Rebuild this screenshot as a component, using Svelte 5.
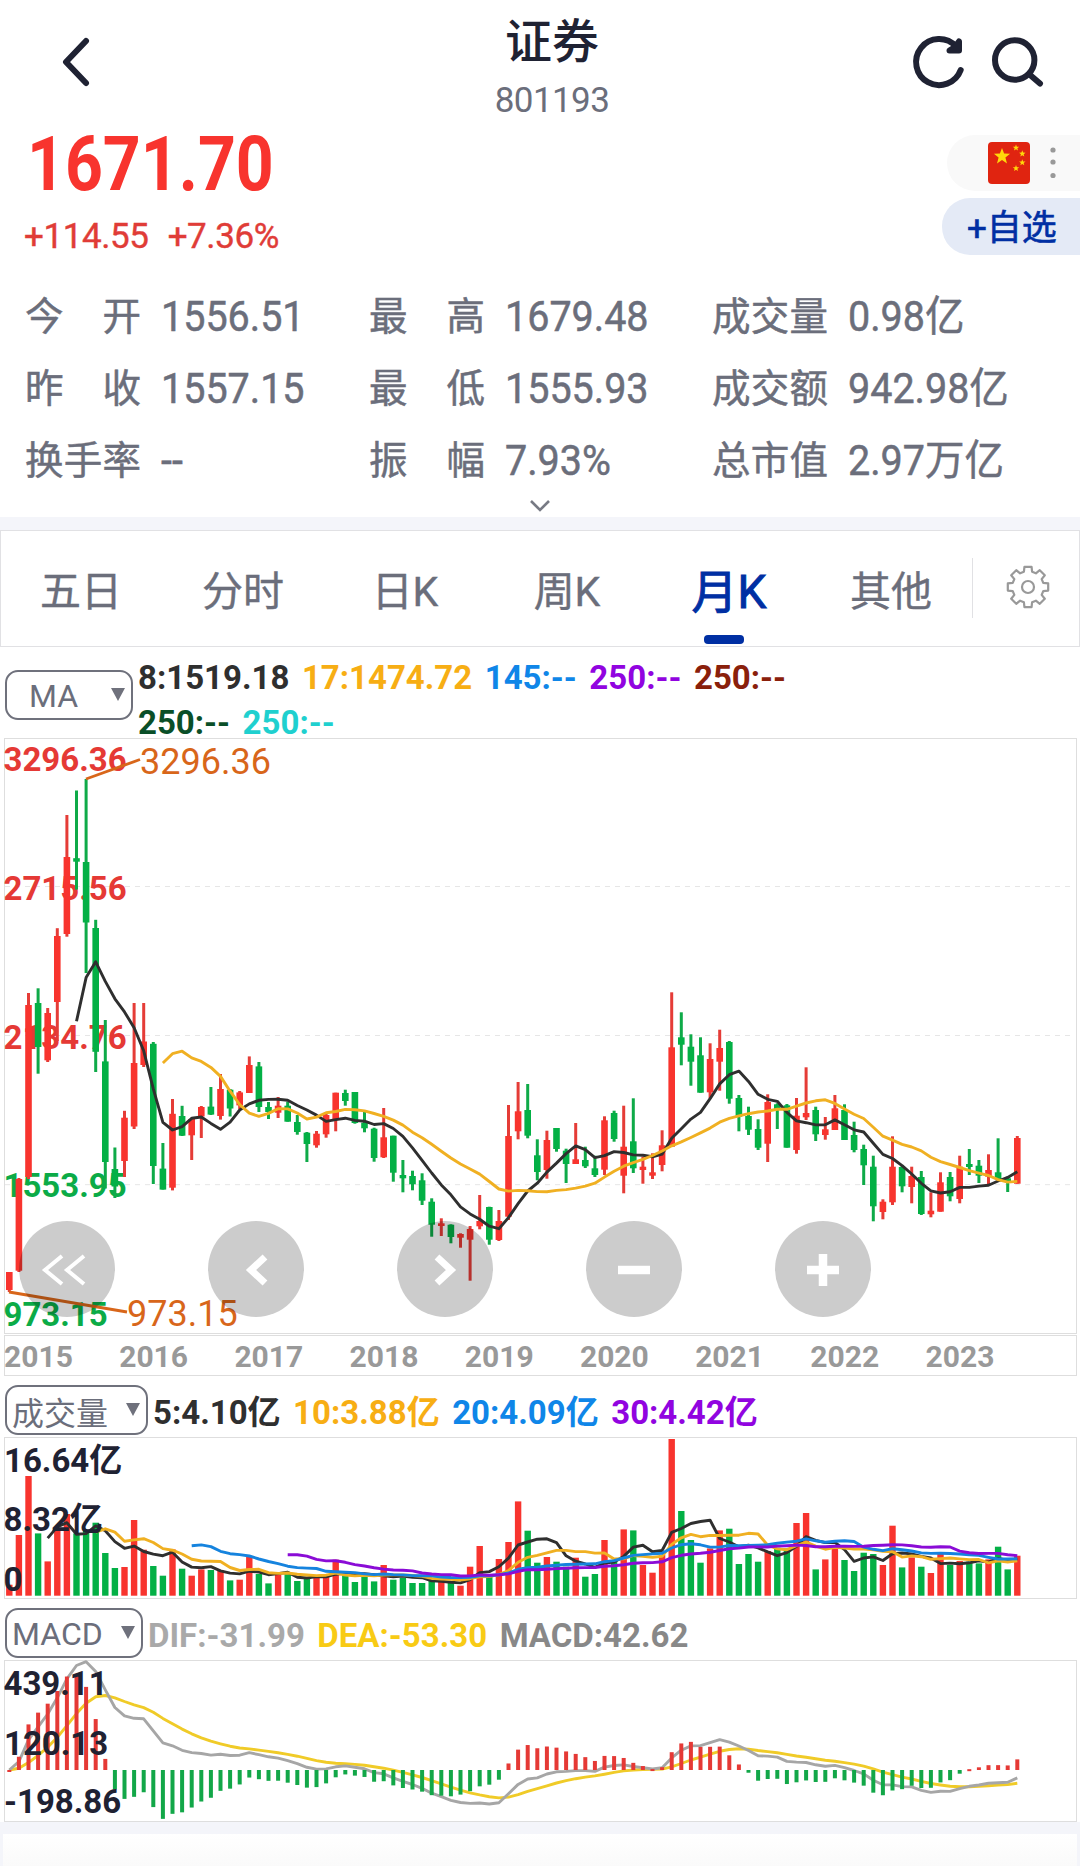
<script>
	const stats = [
		['今开', '1556.51'],
		['最高', '1679.48'],
		['成交量', '0.98亿'],
		['昨收', '1557.15'],
		['最低', '1555.93'],
		['成交额', '942.98亿'],
		['换手率', '--'],
		['振幅', '7.93%'],
		['总市值', '2.97万亿']
	];

	const tabs = ['五日', '分时', '日K', '周K', '月K', '其他'];
	let activeTab = '月K';

	const maLegend = [
		['8:1519.18', '#2f2f2f'],
		['17:1474.72', '#f7ae14'],
		['145:--', '#0f86e8'],
		['250:--', '#9104e0'],
		['250:--', '#8a200b'],
		['250:--', '#0a4f28'],
		['250:--', '#1fd0cf']
	];
	const volLegend = [
		['5:4.10亿', '#2f2f2f'],
		['10:3.88亿', '#f7ae14'],
		['20:4.09亿', '#0f86e8'],
		['30:4.42亿', '#9104e0']
	];
	const macdLegend = [
		['DIF:-31.99', '#a9a9a9'],
		['DEA:-53.30', '#f8cb15'],
		['MACD:42.62', '#888']
	];

	const years = [2015, 2016, 2017, 2018, 2019, 2020, 2021, 2022, 2023];

	// high, body top, body bottom, low, 1 = rising month (y positions in the price pane)
	const candles = [
		[1272, 1272, 1290, 1292, 1], [1178, 1179, 1270.7, 1272, 1], [993, 1005, 1177, 1179, 1],
		[988.3, 1003, 1047, 1073.7, 0], [1008, 1013, 1060.3, 1062, 1], [928.2, 936, 1002, 1041, 1],
		[815, 857, 934, 936.7, 1], [790.5, 858.2, 861.7, 889.6, 0], [779, 862, 922.5, 973, 0],
		[919.8, 928, 1051.8, 1072, 0], [1020, 1061.4, 1162, 1188.5, 0], [1147.5, 1169, 1186.5, 1198, 0],
		[1110.8, 1117.7, 1161, 1177, 1], [1003, 1063, 1126.5, 1129, 1], [1003, 1041.5, 1065, 1067, 1],
		[1042, 1043.8, 1166, 1184, 0], [1143, 1168.6, 1189.6, 1189.6, 0], [1099, 1113.8, 1187.7, 1190.4, 1],
		[1105.8, 1116, 1135.7, 1136, 0], [1117.7, 1119, 1135.3, 1160, 1], [1106, 1107, 1116.5, 1138, 1],
		[1087, 1106.6, 1114.6, 1115, 0], [1074, 1089, 1116, 1119.6, 1], [1089, 1089.7, 1108.5, 1116.5, 0],
		[1091, 1092.4, 1105.4, 1109, 1], [1056.4, 1065, 1093, 1093, 1], [1062, 1066.4, 1107, 1112, 0],
		[1102, 1107, 1112, 1119, 0], [1097, 1105.7, 1112.7, 1118, 1], [1101.7, 1105.7, 1121.7, 1121.7, 0],
		[1115, 1122, 1132, 1134.7, 0], [1132, 1132.7, 1144, 1162, 0], [1131, 1133.7, 1145.3, 1147.7, 1],
		[1112.7, 1115, 1134.3, 1137.7, 1], [1092.7, 1092.7, 1119.3, 1131.3, 1], [1089.7, 1093, 1101, 1105.7, 0],
		[1092, 1092, 1123, 1123.7, 0], [1111.7, 1122.7, 1128.3, 1132.3, 0], [1127.7, 1128.7, 1158, 1161.7, 0],
		[1108, 1137.3, 1157.3, 1158, 1], [1135.7, 1135.7, 1172.7, 1181.7, 0], [1160, 1175, 1178.3, 1192.3, 0],
		[1170.7, 1176, 1184.3, 1190.3, 0], [1173.3, 1180.3, 1200.7, 1205, 0], [1198.3, 1201.7, 1224.7, 1236.7, 0],
		[1218.3, 1223.3, 1226, 1236, 1], [1224.3, 1224.7, 1237, 1243.3, 0], [1233.3, 1234, 1237.7, 1247.7, 1],
		[1226, 1229, 1239.7, 1280.7, 1], [1195, 1221, 1226.3, 1229.3, 1], [1206.7, 1207, 1239.7, 1244.7, 0],
		[1210, 1221, 1240, 1241, 1], [1105, 1136, 1216.7, 1220, 1], [1082, 1111.3, 1131.3, 1139.3, 1],
		[1084, 1110, 1135.7, 1138.3, 0], [1139.3, 1155.3, 1172, 1180.3, 0], [1130.7, 1140, 1170, 1178.7, 1],
		[1128, 1128, 1149, 1151.7, 0], [1148.7, 1150.7, 1164, 1183, 0], [1123, 1159.3, 1164, 1164, 1],
		[1146.7, 1160, 1166.3, 1168, 0], [1155.7, 1168.3, 1175, 1177, 0], [1116.3, 1120.3, 1169.7, 1175, 1],
		[1110.7, 1113, 1139, 1141.7, 0], [1105.7, 1146.7, 1175.7, 1193.3, 1], [1098.3, 1141.3, 1168.3, 1173, 0],
		[1156.7, 1166.7, 1170, 1183.7, 1], [1153.3, 1172.3, 1175.7, 1179, 1], [1130.3, 1145.3, 1165, 1171.3, 1],
		[992.3, 1047.3, 1146.7, 1146.7, 1], [1012.3, 1037.3, 1044.7, 1065.3, 0], [1034.3, 1046.7, 1061.7, 1085.7, 0],
		[1037.3, 1055.3, 1092.7, 1092.7, 0], [1043.3, 1059, 1092.3, 1098.3, 1], [1029.7, 1048, 1061.7, 1090.7, 1],
		[1041, 1042, 1098.7, 1103.7, 0], [1095, 1098, 1116.7, 1131.3, 0], [1106.7, 1116, 1129.7, 1135, 0],
		[1119.3, 1129, 1147.7, 1150, 0], [1094.3, 1102, 1143.7, 1162, 1], [1103.3, 1104.3, 1109, 1129, 0],
		[1104, 1105.3, 1147.7, 1147.7, 0], [1098, 1115.7, 1150, 1153.7, 1], [1067.3, 1113, 1117.3, 1120, 1],
		[1106.7, 1110, 1134.3, 1141, 0], [1117, 1129.3, 1135, 1139.7, 1], [1095, 1108.3, 1130, 1130, 1],
		[1104.3, 1110, 1140, 1140, 0], [1121.7, 1135, 1150, 1152.3, 0], [1144.7, 1149, 1165.3, 1185, 0],
		[1155.7, 1166.7, 1206.3, 1221.3, 0], [1199.3, 1201.7, 1212, 1219.3, 1], [1136.3, 1166.7, 1202.3, 1205, 1],
		[1165, 1167, 1186.3, 1192.3, 0], [1166.7, 1176, 1187, 1203.3, 1], [1171, 1177, 1214, 1215, 0],
		[1192.3, 1210.7, 1214.3, 1217.3, 1], [1172.3, 1182.3, 1211.7, 1211.7, 1], [1172, 1177, 1196.3, 1201.3, 0],
		[1155.7, 1166.7, 1199, 1203.3, 1], [1149, 1164, 1167, 1175, 0], [1160, 1165.7, 1175.7, 1183, 0],
		[1154.3, 1170, 1176.7, 1185.7, 1], [1138.3, 1172.3, 1179.3, 1180, 0], [1176.7, 1178.3, 1181.7, 1192, 0],
		[1136, 1138, 1183.7, 1183.7, 1]
	];

	// bar heights of the volume pane
	const volumes = [
		11, 60.7, 119.7, 62.3, 34.3, 67, 81.7, 62.3, 65, 73, 42.7, 27.7, 28.7, 75.7, 46, 29.7, 20, 46.3,
		27, 20, 26.3, 25.7, 25.7, 15.3, 16, 39.7, 21.7, 12.3, 20.7, 23.3, 14.7, 17.3, 19.7, 19.7, 36,
		20.7, 13.7, 19.7, 14.3, 30.7, 16, 18, 12.7, 12.7, 14.7, 13.7, 13, 10, 29, 49.7, 19, 36.7, 53.7,
		94.3, 65, 33, 38.7, 34, 29, 38, 19, 21.7, 55.7, 34, 66.3, 65.3, 30.7, 23, 40.7, 156.7, 84.7,
		55.7, 33, 47.3, 65.3, 67, 31.7, 41.7, 34, 44.7, 48, 47.3, 72.7, 82.7, 26.3, 36.3, 49, 35.7,
		24.7, 43, 41.7, 30.7, 70, 28.3, 38.3, 29, 22.7, 42.3, 30.7, 34.7, 34, 32.3, 36.3, 49, 26.3, 40
	];

	const x = (i) => 9.3 + 9.6 * i;
	const color = (up) => (up ? '#f8342e' : '#03b045');

	function average(values, n) {
		return values.map((_, i) =>
			i < n - 1 ? null : values.slice(i - n + 1, i + 1).reduce((a, b) => a + b, 0) / n
		);
	}

	function ema(values, n) {
		let last = values[0];
		return values.map((v) => (last = last + ((v - last) * 2) / (n + 1)));
	}

	const line = (values, y = (v) => v) =>
		values
			.map((v, i) => (v === null ? null : `${x(i).toFixed(1)},${y(v).toFixed(1)}`))
			.filter(Boolean)
			.join(' ');

	const closes = candles.map((c) => (c[4] ? c[1] : c[2]));
	const volY = (v) => 1595.7 - v;

	const prices = closes.map((y) => 973.15 + (1291.8 - y) * 4.53);
	const slow = ema(prices, 26);
	const dif = ema(prices, 12).map((v, i) => v - slow[i]);
	const dea = ema(dif, 9);
	const macdY = (v) => 1770 - v / 4.06;

	const gear = Array.from({ length: 8 }, (_, k) =>
		[[15.8, -15], [20.5, -10], [20.5, 10], [15.8, 15]].map(([r, d]) => {
			const a = ((k * 45 + d) * Math.PI) / 180;
			return `${(22 + r * Math.sin(a)).toFixed(2)},${(22 - r * Math.cos(a)).toFixed(2)}`;
		})
	)
		.flat()
		.join(' ');

	const star = (cx, cy, r) =>
		Array.from({ length: 10 }, (_, k) => {
			const a = (k * Math.PI) / 5;
			const d = k % 2 ? r * 0.42 : r;
			return `${(cx + d * Math.sin(a)).toFixed(2)},${(cy - d * Math.cos(a)).toFixed(2)}`;
		}).join(' ');
</script>

<div class="page">
	<header>
		<svg class="back" width="32" height="52" viewBox="0 0 32 52">
			<path d="M26 5 L6 26 L26 47" />
		</svg>
		<div class="title">
			<h1>证券</h1>
			<span>801193</span>
		</div>
		<svg class="actions" width="140" height="60" viewBox="910 32 140 60">
			<path d="M960.7 70 A23 23 0 1 1 956 46.5" />
			<path class="head" d="M959 41.5 L959 50.5 L949.5 50.5 L955 47 Z" />
			<circle cx="1014.7" cy="60" r="19.7" />
			<path d="M1029.5 74.5 L1040 83.5" />
		</svg>
	</header>

	<section class="quote">
		<div>
			<div class="price">1671.70</div>
			<div class="change"><span>+114.55</span><span>+7.36%</span></div>
		</div>
		<div class="pills">
			<div class="market">
				<svg width="42" height="42" viewBox="0 0 42 42">
					<rect width="42" height="42" rx="4" fill="#e02410" />
					<g fill="#ffd80a">
						<polygon points={star(14, 14.5, 8.5)} />
						<polygon points={star(28, 5.8, 3.4)} />
						<polygon points={star(34.3, 11.7, 3.4)} />
						<polygon points={star(34.3, 20.6, 3.4)} />
						<polygon points={star(28, 26.3, 3.4)} />
					</g>
				</svg>
				<svg width="6" height="34" viewBox="0 0 6 34" fill="#999">
					<circle cx="3" cy="4" r="2.6" />
					<circle cx="3" cy="16" r="2.6" />
					<circle cx="3" cy="29.5" r="2.6" />
				</svg>
			</div>
			<div class="add">+自选</div>
		</div>
	</section>

	<section class="stats">
		{#each stats as [label, value]}
			<div class="stat">
				<span class="label">{#each [...label] as ch}<i>{ch}</i>{/each}</span>
				<span class="value">{value}</span>
			</div>
		{/each}
	</section>
	<div class="more">
		<svg width="22" height="14" viewBox="0 0 22 14"><path d="M2 2 L11 11 L20 2" /></svg>
	</div>

	<nav>
		{#each tabs as tab}
			<button class:active={tab === activeTab} on:click={() => (activeTab = tab)}>{tab}</button>
		{/each}
		<div class="settings">
			<svg width="44" height="44" viewBox="0 0 44 44">
				<polygon points={gear} />
				<circle cx="22" cy="22" r="6" />
			</svg>
		</div>
	</nav>

	<div class="bar ma-bar">
		<div class="select ma">MA<b></b></div>
		<div class="legend">
			{#each maLegend as [text, c]}<span style="color: {c}">{text}</span>{/each}
		</div>
	</div>

	<div class="panel price-panel">
		<svg width="1071" height="594" viewBox="5 739 1071 594">
			{#each [886.5, 1035.5, 1184.7] as y}
				<line x1="5" x2="1070" y1={y} y2={y} stroke="#e6e6e6" stroke-dasharray="5 5" />
			{/each}
			<g class="axis">
				<text x="3.5" y="771" fill="#e53935">3296.36</text>
				<text x="3.5" y="900" fill="#e53935">2715.56</text>
				<text x="3.5" y="1049" fill="#e53935">2134.76</text>
				<text x="3.5" y="1197" fill="#0bab47">1553.95</text>
				<text x="3.5" y="1326" fill="#0bab47">973.15</text>
			</g>
			{#each candles as [high, top, bottom, low, up], i}
				<rect x={x(i) - 1.5} y={high} width="3" height={low - high} fill={up ? '#e53c37' : '#0eaa48'} />
				<rect x={x(i) - 3.3} y={top} width="6.6" height={bottom - top} fill={color(up)} />
			{/each}
			<g class="lines">
				<polyline points={line(average(closes, 8))} stroke="#2f2f2f" />
				<polyline points={line(average(closes, 17))} stroke="#f0b022" />
				<path d="M86 779 L140 759.5" stroke="#d8661a" />
				<path d="M9 1292 L127 1312" stroke="#d8661a" />
			</g>
			<g class="peak">
				<text x="140" y="774">3296.36</text>
				<text x="127" y="1326">973.15</text>
			</g>
		</svg>
		<div class="controls">
			<button aria-label="first"><svg viewBox="0 0 96 96"><path class="thin" d="M43 35 L26 49 L43 63 M65 35 L48 49 L65 63" /></svg></button>
			<button aria-label="previous"><svg viewBox="0 0 96 96"><path d="M57 36 L43 49 L57 62" /></svg></button>
			<button aria-label="next"><svg viewBox="0 0 96 96"><path d="M40 36 L54 49 L40 62" /></svg></button>
			<button aria-label="zoom out"><svg viewBox="0 0 96 96"><path class="thick" d="M32 49 H64" /></svg></button>
			<button aria-label="zoom in"><svg viewBox="0 0 96 96"><path class="thick" d="M32 49 H64 M48 33 V65" /></svg></button>
		</div>
	</div>

	<div class="panel years">
		{#each years as year}<span>{year}</span>{/each}
	</div>

	<div class="bar">
		<div class="select vol">成交量<b></b></div>
		<div class="legend">
			{#each volLegend as [text, c]}<span style="color: {c}">{text}</span>{/each}
		</div>
	</div>
	<div class="panel">
		<svg width="1071" height="160" viewBox="5 1438 1071 160">
			{#each volumes as v, i}
				<rect x={x(i) - 3.2} y={volY(v)} width="6.4" height={v} fill={color(candles[i][4])} />
			{/each}
			<g class="lines">
				<polyline points={line(average(volumes, 5), volY)} stroke="#2f2f2f" />
				<polyline points={line(average(volumes, 10), volY)} stroke="#f0b022" />
				<polyline points={line(average(volumes, 20), volY)} stroke="#1583de" />
				<polyline points={line(average(volumes, 30), volY)} stroke="#8a0bd6" />
			</g>
			<g class="axis dark">
				<text x="4" y="1471.5">16.64亿</text>
				<text x="3.5" y="1531">8.32亿</text>
				<text x="3.5" y="1591">0</text>
			</g>
		</svg>
	</div>

	<div class="bar">
		<div class="select macd">MACD<b></b></div>
		<div class="legend">
			{#each macdLegend as [text, c]}<span style="color: {c}">{text}</span>{/each}
		</div>
	</div>
	<div class="panel">
		<svg width="1071" height="160" viewBox="5 1661 1071 160">
			<g class="lines">
				<polyline points={line(dea, macdY)} stroke="#f0cb28" />
				<polyline points={line(dif, macdY)} stroke="#a6a6a6" />
			</g>
			{#each dif as d, i}
				{@const h = (2 * (d - dea[i])) / 4.06}
				<rect
					x={x(i) - 2}
					y={h > 0 ? 1770 - h : 1770}
					width="4"
					height={Math.max(Math.abs(h), 2)}
					fill={h >= 0 ? '#e53935' : '#12a748'}
				/>
			{/each}
			<g class="axis dark">
				<text x="3.5" y="1694.5">439.11</text>
				<text x="4" y="1754.5">120.13</text>
				<text x="4" y="1813">-198.86</text>
			</g>
		</svg>
	</div>

	<div class="next-card"></div>
</div>

<style>
	:global(body) {
		margin: 0;
		background: #f4f5fa;
	}

	.page {
		width: 1080px;
		height: 1866px;
		overflow: hidden;
		background: #fff;
		color: #6b6e7b;
		font-family: Roboto, 'Noto Sans CJK SC', sans-serif;
	}

	svg {
		display: block;
		overflow: visible;
	}

	button {
		padding: 0;
		border: 0;
		background: none;
		color: inherit;
		font: inherit;
	}

	header {
		height: 126px;
		display: grid;
		grid-template-columns: 200px 704px 176px;
	}
	.back {
		margin: 36px 0 0 60px;
	}
	.actions {
		margin: 32px 0 0 6px;
	}
	.back,
	.actions {
		fill: none;
		stroke: #1f2233;
		stroke-width: 6;
		stroke-linecap: round;
		stroke-linejoin: round;
	}
	.actions .head {
		fill: #1f2233;
	}
	.title {
		display: flex;
		flex-direction: column;
		align-items: center;
	}
	.title h1 {
		margin: 15px 0 0;
		font-size: 47px;
		line-height: 54px;
		font-weight: 500;
		color: #1f2233;
	}
	.title span {
		margin-top: 12px;
		font-size: 35px;
		line-height: 40px;
		letter-spacing: -0.6px;
	}

	.quote {
		height: 153px;
		display: flex;
		justify-content: space-between;
	}
	.price {
		width: 300px;
		margin: -2px 0 0 27px;
		font-size: 76px;
		line-height: 80px;
		font-weight: 700;
		color: #f8342e;
		transform: scaleX(0.87);
		transform-origin: left;
	}
	.change {
		display: flex;
		gap: 19px;
		margin: 13px 0 0 24px;
		font-size: 35px;
		line-height: 40px;
		letter-spacing: -0.4px;
		color: #e03c37;
		-webkit-text-stroke: 0.4px;
	}
	.pills {
		display: flex;
		flex-direction: column;
		align-items: flex-end;
		gap: 7px;
		padding-top: 9px;
	}
	.market {
		box-sizing: border-box;
		width: 133px;
		height: 56px;
		padding-left: 41px;
		display: flex;
		align-items: center;
		gap: 20px;
		border-radius: 28px 0 0 28px;
		background: #f9f9f9;
	}
	.add {
		box-sizing: border-box;
		width: 138px;
		height: 57px;
		padding-left: 25px;
		border-radius: 28px 0 0 28px;
		background: #e4eaf6;
		color: #002fa3;
		font-size: 35px;
		line-height: 62px;
		-webkit-text-stroke: 0.6px;
	}

	.stats {
		display: grid;
		grid-template-columns: 344px 343px 1fr;
		grid-auto-rows: 72px;
		padding-left: 25px;
	}
	.stat {
		display: flex;
		line-height: 75px;
		white-space: nowrap;
		-webkit-text-stroke: 0.5px;
	}
	.label {
		width: 116px;
		margin-right: 20px;
		display: flex;
		justify-content: space-between;
		font-size: 38.5px;
	}
	.label i {
		font-style: normal;
	}
	.value {
		font-size: 42px;
		transform: scaleX(0.94);
		transform-origin: left;
	}
	.more {
		height: 22px;
		display: flex;
		justify-content: center;
		align-items: center;
	}
	.more svg {
		fill: none;
		stroke: #777a84;
		stroke-width: 2.6;
	}

	nav {
		box-sizing: border-box;
		height: 130px;
		display: flex;
		padding-top: 1px;
		border-top: 13px solid #f4f5fa;
		box-shadow: inset 0 0 0 1px #e1e1e4;
	}
	nav button {
		width: 162px;
		display: flex;
		flex-direction: column;
		align-items: center;
		font-size: 41px;
		line-height: 122px;
		-webkit-text-stroke: 0.4px;
	}
	.active {
		color: #002fa3;
		font-size: 46px;
		-webkit-text-stroke: 1px;
	}
	.active::after {
		content: '';
		width: 40px;
		height: 9px;
		margin: -18px 10px 0 0;
		border-radius: 4px;
		background: #002fa3;
	}
	.settings {
		height: 60px;
		margin-top: 27px;
		padding: 7px 0 0 33px;
		box-sizing: border-box;
		border-left: 1px solid #e1e1e4;
	}
	.settings svg {
		fill: none;
		stroke: #999;
		stroke-width: 2.2;
		stroke-linejoin: round;
	}

	.bar {
		box-sizing: border-box;
		height: 61px;
		padding: 9px 0 0 5px;
		display: flex;
	}
	.ma-bar {
		height: 91px;
		padding-top: 8px;
	}
	.select {
		box-sizing: border-box;
		height: 50px;
		padding: 2px 6px 0 7px;
		display: flex;
		align-items: center;
		justify-content: space-between;
		border: 2px solid #6f717c;
		border-radius: 13px;
		font-size: 32px;
	}
	.select b {
		margin-top: -3px;
		border: 7px solid transparent;
		border-top: 13px solid #6f717c;
		border-bottom: 0;
	}
	.ma {
		width: 128px;
		margin: 15px 5px 0 0;
		padding-left: 22px;
	}
	.vol {
		width: 143px;
		margin-right: 5px;
		padding-left: 5px;
	}
	.macd {
		width: 138px;
		margin-right: 5px;
		padding-left: 5px;
	}
	.legend {
		width: 700px;
		display: flex;
		flex-wrap: wrap;
		gap: 0 12.5px;
		padding-top: 3px;
		font-size: 33px;
		line-height: 50px;
		font-weight: 700;
	}
	.ma-bar .legend {
		padding-top: 0;
		line-height: 45px;
	}

	.panel {
		position: relative;
		margin: 0 3px 0 4px;
		border: 1px solid #dedede;
	}
	.axis {
		font-size: 33px;
		font-weight: 700;
	}
	.dark {
		fill: #1f2233;
	}
	.peak {
		font-size: 36px;
		fill: #d8661a;
	}
	.lines {
		fill: none;
		stroke-width: 2.9;
		stroke-linejoin: round;
	}

	/* paging and zoom buttons float over the candles */
	.controls {
		position: absolute;
		left: 14px;
		bottom: 16px;
		display: flex;
		gap: 93px;
	}
	.controls button {
		width: 96px;
		height: 96px;
		border-radius: 50%;
		background: rgba(0, 0, 0, 0.2);
	}
	.controls path {
		fill: none;
		stroke: #fff;
		stroke-width: 7;
	}
	.controls .thin {
		stroke-width: 4;
	}
	.controls .thick {
		stroke-width: 8.5;
	}

	.years {
		height: 39px;
		margin-top: 1px;
		display: flex;
		color: #999;
		font-size: 30px;
		line-height: 41px;
		font-weight: 700;
	}
	.years span {
		width: 115.2px;
		text-indent: -1px;
	}

	.next-card {
		height: 32px;
		border-top: 12px solid #f4f5fa;
		border-left: 3px solid #f4f5fa;
		border-right: 3px solid #f4f5fa;
		background: linear-gradient(#fff, #fafafa);
	}
</style>
